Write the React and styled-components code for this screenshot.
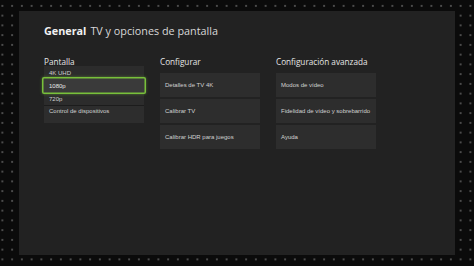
import React from 'react';
import styled, { createGlobalStyle } from 'styled-components';

const GlobalStyle = createGlobalStyle`
  html, body {
    margin: 0;
    padding: 0;
    width: 474px;
    height: 266px;
    overflow: hidden;
    background-color: #0b0b0b;
    background-image: radial-gradient(circle, #686868 0.6px, transparent 0.9px);
    background-size: 9.75px 9.75px;
    background-position: -2.5px 1px;
    font-family: "Open Sans", "Noto Sans", sans-serif;
  }
`;

const Screen = styled.div`
  padding: 11px 19px;
`;

const Panel = styled.div`
  width: 436px;
  height: 244px;
  box-sizing: border-box;
  background: #222222;
  padding: 12px 25px 0;
`;

const Title = styled.h1`
  margin: 0;
  font-size: 10.8px;
  line-height: 16px;
  font-weight: 400;
  color: #d8d8d8;

  b {
    color: #f2f2f2;
    font-weight: 700;
    margin-right: 4px;
  }
`;

const Columns = styled.div`
  display: grid;
  grid-template-columns: repeat(3, 100px);
  column-gap: 16px;
  margin-top: 17px;
`;

const Column = styled.div`
  display: flex;
  flex-direction: column;
`;

const Heading = styled.h2`
  margin: 0 0 5px;
  font-size: 8.2px;
  line-height: 12px;
  font-weight: 400;
  color: #e6e6e6;
  white-space: nowrap;
`;

const Stack = styled.div`
  position: relative;
  display: flex;
  flex-direction: column;
  gap: 2.5px;
`;

const Tile = styled.div`
  height: 23.5px;
  display: flex;
  align-items: center;
  padding: 0 5px;
  background: #2d2d2d;
  color: #d2d2d2;
  font-family: "Liberation Sans", Arial, sans-serif;
  font-size: 6px;
  white-space: nowrap;
`;

const Dropdown = styled.div`
  position: absolute;
  top: -7px;
  left: 0;
  right: 0;
  display: flex;
  flex-direction: column;
  background: #2c2c2c;
  border-bottom: 1px solid #1c1c1c;
`;

const Option = styled.div`
  position: relative;
  height: 13px;
  display: flex;
  align-items: center;
  padding: 0 5px;
  font-family: "Liberation Sans", Arial, sans-serif;
  font-size: 6px;
  color: ${p => (p.$active ? '#e8e8e8' : '#cfcfcf')};
  background: ${p => (p.$active ? '#3a3a3a' : 'transparent')};
  ${p => p.$active && `
    margin: -2px -2px;
    padding: 0 7px;
    height: 17px;
    z-index: 1;
    border-radius: 2px;
    box-shadow: inset 0 0 0 1.5px #78c03a, 0 0 3px rgba(120, 192, 58, 0.55);
  `}
`;

const resolutions = ['4K UHD', '1080p', '720p'];

const App = () => (
  <>
    <GlobalStyle />
    <Screen>
      <Panel>
        <Title><b>General</b>TV y opciones de pantalla</Title>
        <Columns>
          <Column>
            <Heading>Pantalla</Heading>
            <Stack>
              <Tile />
              <Tile>Control de dispositivos</Tile>
              <Dropdown>
                {resolutions.map(r => (
                  <Option key={r} $active={r === '1080p'}>{r}</Option>
                ))}
              </Dropdown>
            </Stack>
          </Column>
          <Column>
            <Heading>Configurar</Heading>
            <Stack>
              <Tile>Detalles de TV 4K</Tile>
              <Tile>Calibrar TV</Tile>
              <Tile>Calibrar HDR para juegos</Tile>
            </Stack>
          </Column>
          <Column>
            <Heading>Configuración avanzada</Heading>
            <Stack>
              <Tile>Modos de vídeo</Tile>
              <Tile>Fidelidad de vídeo y sobrebarrido</Tile>
              <Tile>Ayuda</Tile>
            </Stack>
          </Column>
        </Columns>
      </Panel>
    </Screen>
  </>
);

export default App;
